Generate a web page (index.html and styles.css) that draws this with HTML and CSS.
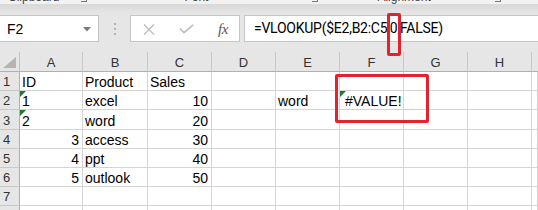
FILE: index.html
```html
<!DOCTYPE html>
<html>
<head>
<meta charset="utf-8">
<link rel="stylesheet" href="styles.css">
</head>
<body>
<div class="page">
  <div class="ribbon">
    <span class="rl rl-clip">Clipboard</span>
    <span class="launch l1"></span>
    <span class="rl rl-font">Font</span>
    <span class="launch l2"></span>
    <span class="rl rl-align">Alignment</span>
    <span class="launch l3"></span>
  </div>
  <div class="toolbar">
    <div class="namebox">
      <span class="nb-text">F2</span>
      <svg class="nb-arrow" width="8" height="5" viewBox="0 0 8 5"><path d="M0 0H8L4 4.5Z" fill="#7a7a7a"/></svg>
    </div>
    <div class="dots"><i></i><i></i><i></i></div>
    <div class="fbtns">
      <svg class="ico-x" width="12" height="11" viewBox="0 0 12 11"><path d="M1 0.5L11 10.5M11 0.5L1 10.5" stroke="#bdbdbd" stroke-width="1.3" fill="none"/></svg>
      <svg class="ico-ok" width="15" height="10" viewBox="0 0 15 10"><path d="M0.8 4.5L5 8.6L14.2 0.8" stroke="#bdbdbd" stroke-width="1.6" fill="none"/></svg>
      <span class="fx">fx</span>
    </div>
    <div class="formula">=VLOOKUP($E2,B2:C5,0,FALSE)</div>
  </div>
  <div class="sheet">
    <div class="corner"><svg width="13" height="11" viewBox="0 0 13 11"><path d="M13 0V11H0Z" fill="#b4b4b4"/></svg></div>
    <div class="ch">A</div><div class="ch">B</div><div class="ch">C</div><div class="ch">D</div><div class="ch">E</div><div class="ch">F</div><div class="ch">G</div><div class="ch">H</div><div class="ch last"></div>

    <div class="rh">1</div><div class="c">ID</div><div class="c">Product</div><div class="c">Sales</div><div class="c"></div><div class="c"></div><div class="c"></div><div class="c"></div><div class="c"></div><div class="c"></div>

    <div class="rh">2</div><div class="c warn">1</div><div class="c">excel</div><div class="c num">10</div><div class="c"></div><div class="c">word</div><div class="c warn err">#VALUE!</div><div class="c"></div><div class="c"></div><div class="c"></div>

    <div class="rh">3</div><div class="c warn">2</div><div class="c">word</div><div class="c num">20</div><div class="c"></div><div class="c"></div><div class="c"></div><div class="c"></div><div class="c"></div><div class="c"></div>

    <div class="rh">4</div><div class="c num">3</div><div class="c">access</div><div class="c num">30</div><div class="c"></div><div class="c"></div><div class="c"></div><div class="c"></div><div class="c"></div><div class="c"></div>

    <div class="rh">5</div><div class="c num">4</div><div class="c">ppt</div><div class="c num">40</div><div class="c"></div><div class="c"></div><div class="c"></div><div class="c"></div><div class="c"></div><div class="c"></div>

    <div class="rh">6</div><div class="c num">5</div><div class="c">outlook</div><div class="c num">50</div><div class="c"></div><div class="c"></div><div class="c"></div><div class="c"></div><div class="c"></div><div class="c"></div>

    <div class="rh">7</div><div class="c"></div><div class="c"></div><div class="c"></div><div class="c"></div><div class="c"></div><div class="c"></div><div class="c"></div><div class="c"></div><div class="c"></div>

    <div class="rh">8</div><div class="c"></div><div class="c"></div><div class="c"></div><div class="c"></div><div class="c"></div><div class="c"></div><div class="c"></div><div class="c"></div><div class="c"></div>
  </div>
  <div class="hl hl-formula"></div>
  <div class="hl hl-cell"></div>
</div>
</body>
</html>
```
FILE: styles.css
```css
* { box-sizing: border-box; }
html, body { margin: 0; padding: 0; }
body { width: 538px; height: 210px; overflow: hidden; background: #fff; }
.page { position: relative; width: 538px; height: 210px; overflow: hidden; font-family: "Liberation Sans", Arial, sans-serif; color: #000; }

.ribbon { height: 5px; background: #f3f2f1; border-bottom: 1px solid #dadada; display: flex; align-items: flex-end; overflow: hidden; font-size: 12px; color: #444; position: relative; }
.rl { display: block; line-height: 12px; margin-bottom: 1px; white-space: nowrap; }
.rl-clip { margin-left: 8px; }
.launch { width: 6px; height: 6px; border-bottom: 1px solid #777; border-right: 1px solid #777; margin-bottom: 2px; }
.l1 { margin-left: 22px; }
.rl-font { margin-left: 97px; }
.l2 { margin-left: 104px; }
.rl-align { margin-left: 59px; }
.l3 { margin-left: 64px; }

.toolbar { height: 47px; background: linear-gradient(#d9d9d9 0px, #e3e3e3 6px, #e6e6e6 10px); padding: 10px 0 10px 0; display: flex; align-items: stretch; }
.namebox { width: 100px; margin-left: -1px; background: #fff; border: 1px solid #c6c6c6; display: flex; align-items: center; padding-left: 7px; padding-right: 7px; }
.nb-text { font-family: "Liberation Sans", Arial, sans-serif; font-size: 14px; line-height: 24px; flex: 1; }
.nb-arrow { margin-top: 1px; }
.dots { width: 31px; display: flex; flex-direction: column; align-items: center; justify-content: center; gap: 3px; }
.dots i { display: block; width: 2px; height: 2px; background: #b3b3b3; }
.fbtns { width: 110px; background: #fff; border: 1px solid #c6c6c6; display: flex; align-items: center; padding-left: 12px; }
.ico-x { margin-top: 1px; }
.ico-ok { margin-left: 24px; margin-top: 1px; }
.fx { margin-left: 24px; font-family: "Liberation Serif", "Times New Roman", serif; font-style: italic; font-size: 15px; color: #5a5a5a; letter-spacing: -0.5px; line-height: 24px; }
.formula { flex: 1; margin-left: 4px; margin-right: -2px; background: #fff; border: 1px solid #c6c6c6; padding-left: 9px; font-family: Roboto, "Liberation Sans", sans-serif; font-size: 14px; letter-spacing: -0.25px; line-height: 24px; white-space: nowrap; }

.sheet { display: grid; grid-template-columns: 20px 63px 65px 64px 64px 64px 64px 64px 64px 1fr; grid-template-rows: 20px 19px 19px 20px 19px 19px 19px 19px 19px; font-size: 14px; }
.corner { background: #e6e6e6; border-right: 1px solid #c3c3c3; border-bottom: 1px solid #b0b0b0; display: flex; align-items: flex-end; justify-content: flex-end; padding: 0 3px 3px 0; }
.ch { background: #e6e6e6; border-right: 1px solid #c8c8c8; border-bottom: 1px solid #b0b0b0; display: flex; align-items: center; justify-content: center; font-size: 13px; color: #333; padding-top: 1px; }
.ch.last { border-right: none; }
.rh { background: #e6e6e6; border-right: 1px solid #b0b0b0; border-bottom: 1px solid #c8c8c8; display: flex; align-items: flex-end; padding-left: 3px; font-size: 13px; line-height: 16px; color: #333; }
.c { position: relative; border-right: 1px solid #d4d4d4; border-bottom: 1px solid #d4d4d4; display: flex; align-items: flex-end; padding: 0 3px 0 2px; line-height: 16px; white-space: nowrap; }
.c.num { justify-content: flex-end; }
.c.err { padding-left: 5px; }
.c.warn::before { content: ""; position: absolute; left: 0; top: 0; border-top: 6px solid #1e7a34; border-right: 6px solid transparent; }

.hl { position: absolute; border: 3px solid #e3222b; border-radius: 2px; }
.hl-formula { left: 387px; top: 13px; width: 14px; height: 43px; }
.hl-cell { left: 335px; top: 74px; width: 94px; height: 49px; }
```
